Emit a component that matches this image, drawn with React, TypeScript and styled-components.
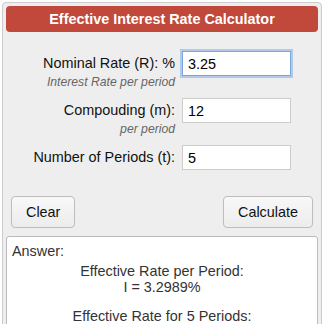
import React from 'react'
import styled, { createGlobalStyle } from 'styled-components'

const GlobalStyle = createGlobalStyle`
  html, body {
    margin: 0;
    padding: 0;
    background: #ffffff;
  }
  body {
    font-family: "Liberation Sans", Arial, Helvetica, sans-serif;
  }
`

interface IField {
  label: string
  hint?: string
  value: string
  focused?: boolean
}

const fields: IField[] = [
  { label: 'Nominal Rate (R): %', hint: 'Interest Rate per period', value: '3.25', focused: true },
  { label: 'Compouding (m):', hint: 'per period', value: '12' },
  { label: 'Number of Periods (t):', value: '5' },
]

const App: React.FC = () => {
  return (
    <>
      <GlobalStyle />
      <Calculator>
        <Header>Effective Interest Rate Calculator</Header>

        <Form>
          {fields.map((f) => (
            <Field key={f.label}>
              <LabelCell>
                <Label>{f.label}</Label>
                {f.hint && <Hint>{f.hint}</Hint>}
              </LabelCell>
              <Input defaultValue={f.value} $focused={f.focused} />
            </Field>
          ))}
        </Form>

        <Buttons>
          <Button>Clear</Button>
          <Button>Calculate</Button>
        </Buttons>

        <Answer>
          <AnswerTitle>Answer:</AnswerTitle>
          <Result>
            Effective Rate per Period:
            <br />
            I = 3.2989%
          </Result>
          <Result>
            Effective Rate for 5 Periods:
            <br />
            I = 17.6190%
          </Result>
        </Answer>
      </Calculator>
    </>
  )
}

export default App

// Styled
const Calculator = styled.div`
  box-sizing: border-box;
  width: 320px;
  margin: 2px;
  padding: 3px;
  background-color: #eeeeee;
  border: 1px solid #cccccc;
  border-radius: 4px;
`

const Header = styled.div`
  height: 26px;
  line-height: 26px;
  background-color: #c0493b;
  border-radius: 4px;
  color: #ffffff;
  font-size: 14.4px;
  font-weight: bold;
  text-align: center;
`

const Form = styled.div`
  display: flex;
  flex-direction: column;
  gap: 9px;
  margin-top: 19px;
  padding-right: 27px;
`

const Field = styled.div`
  display: grid;
  grid-template-columns: 1fr 109px;
  column-gap: 7px;
  align-items: start;
`

const LabelCell = styled.div`
  display: flex;
  flex-direction: column;
  align-items: flex-end;
`

const Label = styled.label`
  height: 25px;
  line-height: 25px;
  font-size: 14.4px;
  color: #111111;
  white-space: nowrap;
`

const Hint = styled.span`
  margin-top: -1px;
  line-height: 14px;
  font-size: 12.2px;
  font-style: italic;
  color: #666666;
`

const Input = styled.input.attrs({ type: 'text' })<{ $focused?: boolean }>`
  box-sizing: border-box;
  width: 109px;
  height: 25px;
  padding: 0 5px;
  margin: 0;
  font-family: inherit;
  font-size: 14.4px;
  color: #000000;
  background: #ffffff;
  border: 1px solid ${({ $focused }) => ($focused ? '#7aa6df' : '#cccccc')};
  border-radius: 0;
  outline: none;
  box-shadow: ${({ $focused }) => ($focused ? '0 0 0 2px rgba(130, 172, 230, 0.55)' : 'none')};
`

const Buttons = styled.div`
  display: flex;
  justify-content: space-between;
  margin-top: 26px;
  padding: 0 5px;
`

const Button = styled.button`
  box-sizing: border-box;
  height: 32px;
  padding: 0 14px;
  font-family: inherit;
  font-size: 14.4px;
  color: #111111;
  background: linear-gradient(#f8f8f8, #ececec);
  border: 1px solid #bdbdbd;
  border-radius: 4px;
  cursor: pointer;
`

const Answer = styled.div`
  margin-top: 8px;
  padding: 6px 5px 12px;
  min-height: 120px;
  background: #ffffff;
  border: 1px solid #bbbbbb;
  border-radius: 3px;
  font-size: 14.4px;
  line-height: 16px;
  color: #333333;
`

const AnswerTitle = styled.div`
  line-height: 17px;
`

const Result = styled.div`
  margin-top: 3px;
  margin-bottom: 13px;
  text-align: center;
`
